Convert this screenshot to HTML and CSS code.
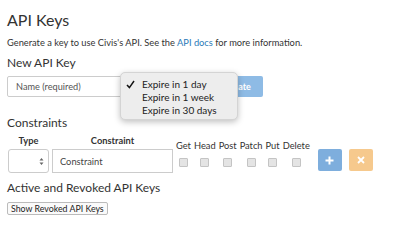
FILE: index.html
```html
<!DOCTYPE html>
<html lang="en">
<head>
    <meta charset="UTF-8">
    <title>API Keys</title>
    <link rel="stylesheet" href="styles.css">
</head>
<body>
    <h1>API Keys</h1>
    <p class="intro">Generate a key to use Civis's API. See the <a href="#">API docs</a> for more information.</p>

    <h2>New API Key</h2>
    <div class="new-key">
        <input type="text" class="name-input" placeholder="Name (required)">
        <div class="expire-select">Expire in 1 day</div>
        <button class="btn-create">Create</button>

        <div class="menu">
            <div class="menu-item checked">
                <svg class="check" width="9" height="9" viewBox="0 0 9 9"><path d="M1 5 L3.4 7.6 L8 1" fill="none" stroke="#111" stroke-width="1.5"/></svg>
                Expire in 1 day
            </div>
            <div class="menu-item">Expire in 1 week</div>
            <div class="menu-item">Expire in 30 days</div>
        </div>
    </div>

    <h2 class="constraints-title">Constraints</h2>
    <div class="constraints">
        <div class="col col-type">
            <div class="col-label strong">Type</div>
            <div class="type-select">
                <svg width="5" height="9" viewBox="0 0 5 9"><path d="M0.5 3.5 L2.5 1 L4.5 3.5 Z M0.5 5.5 L2.5 8 L4.5 5.5 Z" fill="#666"/></svg>
            </div>
        </div>
        <div class="col col-constraint">
            <div class="col-label strong">Constraint</div>
            <input type="text" class="constraint-input" value="Constraint">
        </div>
        <div class="methods">
            <div class="method"><div class="col-label">Get</div><span class="box"></span></div>
            <div class="method"><div class="col-label">Head</div><span class="box"></span></div>
            <div class="method"><div class="col-label">Post</div><span class="box"></span></div>
            <div class="method"><div class="col-label">Patch</div><span class="box"></span></div>
            <div class="method"><div class="col-label">Put</div><span class="box"></span></div>
            <div class="method"><div class="col-label">Delete</div><span class="box"></span></div>
        </div>
        <div class="actions">
            <button class="btn-add">
                <svg width="9" height="9" viewBox="0 0 9 9"><path d="M4.5 0.5 V8.5 M0.5 4.5 H8.5" stroke="#fff" stroke-width="2"/></svg>
            </button>
            <button class="btn-remove">
                <svg width="8" height="8" viewBox="0 0 8 8"><path d="M1 1 L7 7 M7 1 L1 7" stroke="#fff" stroke-width="1.8"/></svg>
            </button>
        </div>
    </div>

    <h2 class="revoked-title">Active and Revoked API Keys</h2>
    <button class="btn-show">Show Revoked API Keys</button>
</body>
</html>
```

FILE: styles.css
```css
body {
    margin: 0;
    padding: 0 7px;
    font-family: Lato, "Open Sans", Arial, sans-serif;
    color: #333;
    background: #fff;
}
h1 {
    font-size: 16px;
    font-weight: 400;
    line-height: 20px;
    margin: 10px 0 0;
}
.intro {
    font-size: 9.3px;
    line-height: 12px;
    margin: 7px 0 0;
}
.intro a {
    color: #2a7ab8;
    text-decoration: none;
}
h2 {
    font-size: 12px;
    font-weight: 400;
    line-height: 16px;
    margin: 6px 0 0;
}
.new-key {
    position: relative;
    display: flex;
    gap: 6px;
    margin-top: 5px;
    height: 21px;
}
.name-input {
    box-sizing: border-box;
    width: 118px;
    height: 21px;
    border: 1px solid #ccc;
    border-radius: 2px;
    padding: 0 8px;
    font-family: inherit;
    font-size: 9.2px;
    color: #333;
}
.name-input::placeholder {
    color: #555;
}
.expire-select {
    box-sizing: border-box;
    width: 75px;
    border: 1px solid #ccc;
    font-size: 9px;
    line-height: 19px;
    padding-left: 6px;
}
.btn-create {
    width: 51px;
    height: 21px;
    border: none;
    border-radius: 2px;
    background: #8ebbe5;
    color: #fff;
    font-family: inherit;
    font-weight: 700;
    font-size: 9px;
    padding: 0;
}
.menu {
    position: absolute;
    left: 113px;
    top: -4px;
    width: 118px;
    height: 48px;
    box-sizing: border-box;
    padding-top: 5px;
    background: #ededed;
    border: 1px solid #d4d4d4;
    border-radius: 5px;
    box-shadow: 0 2px 6px rgba(0,0,0,0.25);
}
.menu-item {
    position: relative;
    font-size: 10px;
    line-height: 13px;
    padding-left: 21px;
    color: #222;
}
.check {
    position: absolute;
    left: 5px;
    top: 2px;
}
.constraints-title {
    margin-top: 18px;
}
.constraints {
    display: flex;
    align-items: flex-end;
    margin-top: 4px;
}
.col {
    display: flex;
    flex-direction: column;
    align-items: center;
    gap: 2px;
}
.col-label {
    font-size: 9.3px;
    line-height: 12px;
    color: #333;
}
.strong {
    font-weight: 700;
}
.col-type {
    margin-left: 1px;
}
.type-select {
    box-sizing: border-box;
    width: 41px;
    height: 24px;
    border: 1px solid #ccc;
    border-radius: 3px;
    display: flex;
    align-items: center;
    justify-content: flex-end;
    padding-right: 4px;
}
.col-constraint {
    margin-left: 3px;
}
.constraint-input {
    box-sizing: border-box;
    width: 121px;
    height: 24px;
    border: 1px solid #ccc;
    padding: 0 7px;
    font-family: inherit;
    font-size: 9.3px;
    color: #444;
}
.methods {
    display: flex;
    gap: 3px;
    margin-left: 3px;
}
.method {
    display: flex;
    flex-direction: column;
    align-items: center;
    gap: 6px;
    height: 33px;
}
.box {
    width: 7px;
    height: 7px;
    border: 1px solid #c4c4c4;
    border-radius: 1px;
    background: #e4e4e4;
}
.actions {
    display: flex;
    gap: 7px;
    margin-left: 8px;
    margin-bottom: 2px;
}
.actions button {
    width: 24px;
    height: 22px;
    border: none;
    border-radius: 2px;
    padding: 0;
    display: flex;
    align-items: center;
    justify-content: center;
}
.btn-add {
    background: #7eaedd;
}
.btn-remove {
    width: 25px;
    background: #f6c98d;
}
.revoked-title {
    margin-top: 7px;
}
.btn-show {
    margin-top: 6px;
    height: 13px;
    padding: 0 3px;
    font-family: inherit;
    font-size: 8.8px;
    line-height: 11px;
    color: #222;
    background: #fafafa;
    border: 1px solid #bbb;
    border-radius: 2px;
}
```
